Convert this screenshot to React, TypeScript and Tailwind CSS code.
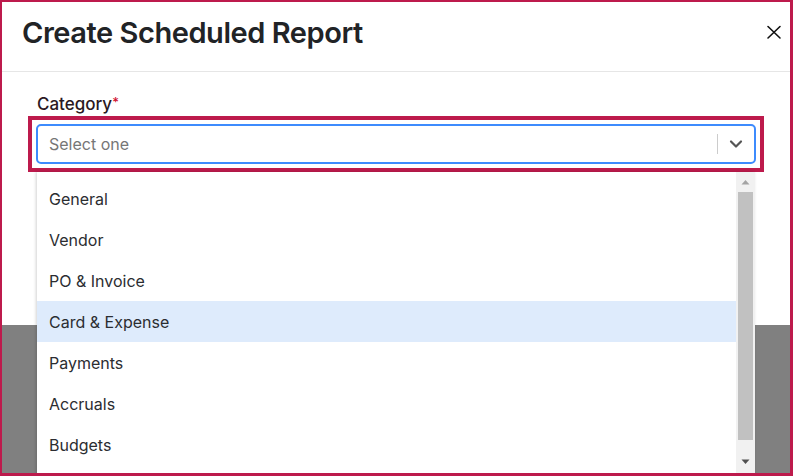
import React from "react";

const items = ["General", "Vendor", "PO & Invoice", "Card & Expense", "Payments", "Accruals", "Budgets"];

export default function App() {
  return (
    <div
      className="w-[793px] h-[476px] overflow-hidden border-t-2 border-l-2 border-r-[3px] border-b-[3px] border-[#bd1a4c] bg-[#808080]"
      style={{ fontFamily: "Inter, 'Noto Sans', sans-serif" }}
    >
      <div className="relative w-full h-full flex flex-col">
        <div className="h-[323px] bg-white flex flex-col">
          <div className="h-[70px] border-b border-[#e6e6e6] flex items-center justify-between pl-[20px] pr-[8px] pb-[9px]">
            <h1 className="text-[29px] font-semibold text-[#212326] tracking-[-0.45px] leading-none">Create Scheduled Report</h1>
            <svg width="16" height="16" viewBox="0 0 16 16">
              <path d="M2 2.5 L14 14 M14 2.5 L2 14" stroke="#111" strokeWidth="1.6" strokeLinecap="round" />
            </svg>
          </div>
          <div className="pl-[26px] pt-[20px]">
            <div className="pl-[9px] text-[17px] font-medium text-[#2b1822] leading-[24px]">
              Category<span className="text-[#d0102f] text-[13px] align-top relative -top-[2px]">*</span>
            </div>
            <div className="w-[736px] h-[56px] border-4 border-[#bd1a4c] p-[4px]">
              <div className="h-full w-full rounded-[5px] border-2 border-[#3d8bfd] flex items-center pl-[11px]">
                <span className="flex-1 text-[16px] text-[#767676]">Select one</span>
                <div className="w-px h-[20px] bg-[#cccccc]" />
                <div className="w-[36px] flex items-center justify-center">
                  <svg width="14" height="10" viewBox="0 0 14 10">
                    <path d="M2 2.5 L7 7.5 L12 2.5" fill="none" stroke="#555" strokeWidth="2.2" strokeLinecap="round" strokeLinejoin="round" />
                  </svg>
                </div>
              </div>
            </div>
          </div>
        </div>
        <div className="flex-1 bg-[#808080]" />

        <div className="absolute left-[35px] top-[170px] w-[718px] h-[310px] bg-white shadow-[-1px_0_3px_rgba(0,0,0,0.18)] flex">
          <div className="flex-1 pt-[6px] overflow-hidden">
            {items.map((it) => (
              <div
                key={it}
                className={`h-[41px] flex items-center pl-[12px] text-[16px] text-[#2b2d31] ${it === "Card & Expense" ? "bg-[#deebfc]" : ""}`}
              >
                {it}
              </div>
            ))}
          </div>
          <div className="w-[19px] bg-[#f1f1f1] flex flex-col items-center">
            <div className="h-[20px] flex items-center justify-center">
              <svg width="9" height="6" viewBox="0 0 9 6">
                <path d="M0.5 5.5 L4.5 1 L8.5 5.5 Z" fill="#a3a3a3" />
              </svg>
            </div>
            <div className="w-[15px] h-[248px] bg-[#c1c1c1]" />
            <div className="h-[26px] w-full flex items-end justify-center pb-[1px]">
              <svg width="9" height="6" viewBox="0 0 9 6">
                <path d="M0.5 0.5 L8.5 0.5 L4.5 5 Z" fill="#505050" />
              </svg>
            </div>
          </div>
        </div>
      </div>
    </div>
  );
}
